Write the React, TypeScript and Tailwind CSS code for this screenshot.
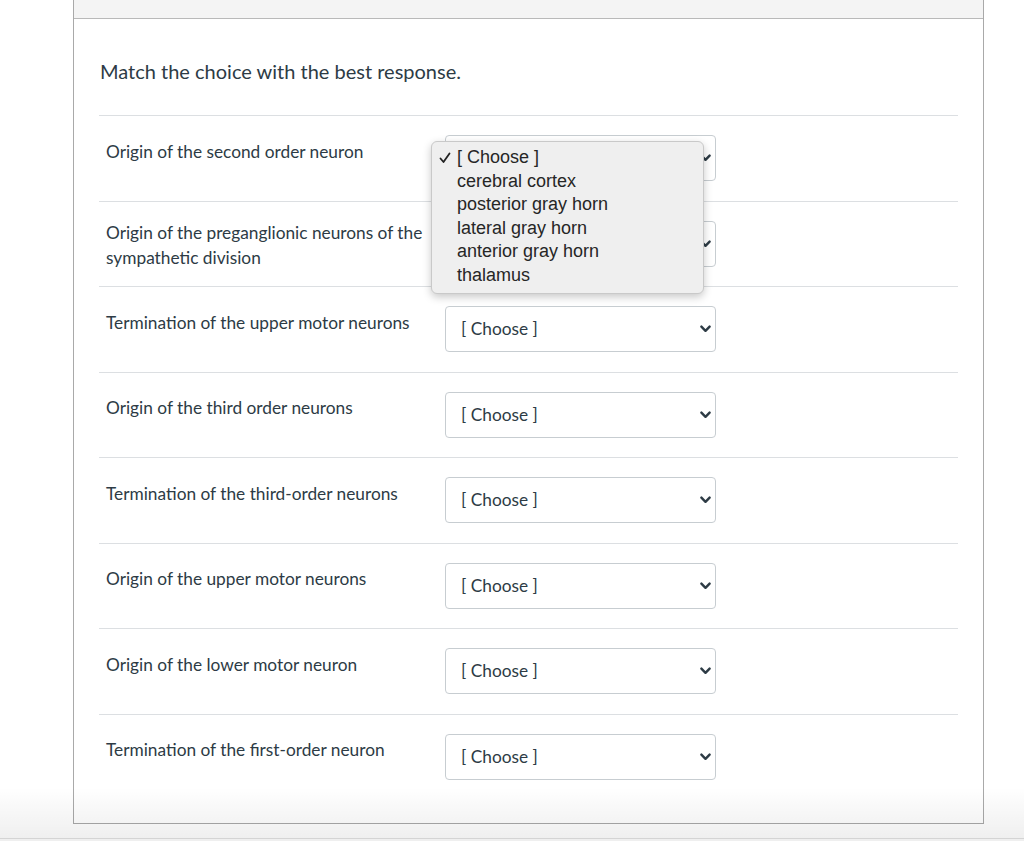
import React, { useState } from "react";

const OPTIONS = [
  "[ Choose ]",
  "cerebral cortex",
  "posterior gray horn",
  "lateral gray horn",
  "anterior gray horn",
  "thalamus",
];

const PROMPTS = [
  "Origin of the second order neuron",
  "Origin of the preganglionic neurons of the sympathetic division",
  "Termination of the upper motor neurons",
  "Origin of the third order neurons",
  "Termination of the third-order neurons",
  "Origin of the upper motor neurons",
  "Origin of the lower motor neuron",
  "Termination of the first-order neuron",
];

function Chevron() {
  return (
    <svg width="11" height="8" viewBox="0 0 11 8" className="shrink-0">
      <path d="M1.4 1.6 L5.5 5.8 L9.6 1.6" fill="none" stroke="#2d3b45" strokeWidth="2.4" strokeLinecap="round" strokeLinejoin="round" />
    </svg>
  );
}

function Check() {
  return (
    <svg width="12" height="12" viewBox="0 0 12 12">
      <path d="M1.5 6.5 L4.5 10 L10.5 1.5" fill="none" stroke="#222" strokeWidth="1.8" strokeLinecap="round" strokeLinejoin="round" />
    </svg>
  );
}

// native-looking select box, the menu is drawn separately when open
function AnswerSelect({ value, open, onToggle, onPick }: { value: string; open: boolean; onToggle: () => void; onPick: (v: string) => void }) {
  return (
    <div className="relative mt-[19px] mb-[19.57px]">
      <button
        onClick={onToggle}
        className="flex items-center justify-between w-[271px] h-[46px] pl-[15px] pr-[4px] bg-white border border-[#c7cdd1] rounded-[4px] text-[17.3px] text-[#2d3b45] text-left"
      >
        <span>{value}</span>
        <Chevron />
      </button>
      {open && (
        <div className="absolute z-10 left-[-14px] top-[6px] w-[273px] pt-[4px] pb-[5px] bg-[#efefef] border border-[#c9c9c9] rounded-[6px] shadow-[0_3px_8px_rgba(0,0,0,0.22)] font-['Liberation_Sans',Arial,sans-serif] text-[18px] leading-[23.6px] text-[#262626]">
          {OPTIONS.map((opt) => (
            <div key={opt} onClick={() => onPick(opt)} className="flex items-center cursor-default">
              <span className="w-[25px] flex justify-center pl-[1px]">{opt === value && <Check />}</span>
              <span>{opt}</span>
            </div>
          ))}
        </div>
      )}
    </div>
  );
}

export default function App() {
  const [answers, setAnswers] = useState<string[]>(PROMPTS.map(() => "[ Choose ]"));
  const [openIdx, setOpenIdx] = useState<number | null>(0);

  const pick = (i: number, v: string) => {
    setAnswers(answers.map((a, j) => (j === i ? v : a)));
    setOpenIdx(null);
  };

  return (
    <div className="relative h-[841px] bg-white overflow-hidden font-['Lato',sans-serif] text-[#2d3b45]">
      <div className="ml-[73px] w-[911px] border-x border-b border-[#a9a9a9]">
        {/* question header, scrolled mostly out of view */}
        <div className="h-[19px] bg-[#f4f4f4] border-b border-[#b9b9b9] overflow-hidden">
          <div className="flex justify-between items-end h-[19px] -mt-[16px] pl-[27px] pr-[40px] text-[18px] font-bold text-[#2d3b45]">
            <span>Question 3</span>
            <span className="font-normal text-[14px]">1 pts</span>
          </div>
        </div>

        <div className="px-[25px] pt-[39px] pb-[23px]">
          <p className="pl-[1px] text-[20px] leading-[27px]">Match the choice with the best response.</p>

          <div className="mt-[30px]">
            {PROMPTS.map((prompt, i) => (
              <div key={i} className="flex border-t border-[#dcdfe2]">
                <div className={`w-[346px] pl-[7px] pr-[12px] text-[17.3px] leading-[25px] ${prompt.length > 40 ? "pt-[18.5px]" : "pt-[22.5px]"}`}>
                  {prompt}
                </div>
                <AnswerSelect
                  value={answers[i]}
                  open={openIdx === i}
                  onToggle={() => setOpenIdx(openIdx === i ? null : i)}
                  onPick={(v) => pick(i, v)}
                />
              </div>
            ))}
          </div>
        </div>
      </div>

      {/* window fade along the bottom edge */}
      <div className="pointer-events-none absolute inset-x-0 bottom-0 h-[54px] bg-linear-to-b from-[rgba(0,0,0,0)] to-[rgba(0,0,0,0.065)]" />
      <div className="absolute inset-x-0 bottom-0 h-[3px] border-t border-[#d4d4d4] bg-[#efefef]" />
    </div>
  );
}
